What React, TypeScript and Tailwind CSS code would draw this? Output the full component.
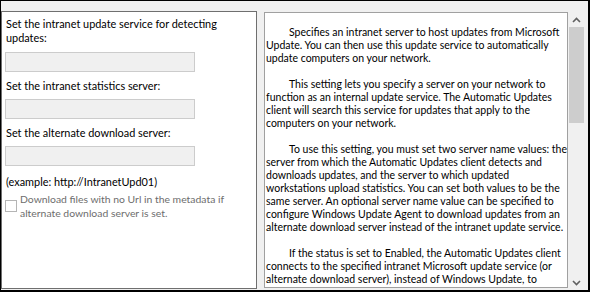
import React from "react";

const P1 = [
  "Specifies an intranet server to host updates from Microsoft",
  "Update. You can then use this update service to automatically",
  "update computers on your network.",
];
const P2 = [
  "This setting lets you specify a server on your network to",
  "function as an internal update service. The Automatic Updates",
  "client will search this service for updates that apply to the",
  "computers on your network.",
];
const P3 = [
  "To use this setting, you must set two server name values: the",
  "server from which the Automatic Updates client detects and",
  "downloads updates, and the server to which updated",
  "workstations upload statistics. You can set both values to be the",
  "same server. An optional server name value can be specified to",
  "configure Windows Update Agent to download updates from an",
  "alternate download server instead of the intranet update service.",
];
const P4 = [
  "If the status is set to Enabled, the Automatic Updates client",
  "connects to the specified intranet Microsoft update service (or",
  "alternate download server), instead of Windows Update, to",
];

function Para({ lines }: { lines: string[] }) {
  return (
    <div className="mb-[13px]">
      {lines.map((l, i) => (
        <div key={i} className={i === 0 ? "whitespace-nowrap pl-[23px]" : "whitespace-nowrap"}>
          {l}
        </div>
      ))}
    </div>
  );
}

function Chevron({ up }: { up?: boolean }) {
  return (
    <svg width="9" height="6" viewBox="0 0 9 6">
      <polyline
        points={up ? "1,5 4.5,1.5 8,5" : "1,1 4.5,4.5 8,1"}
        fill="none"
        stroke="#606060"
        strokeWidth="1.6"
      />
    </svg>
  );
}

export default function App() {
  return (
    <div className="w-[590px] h-[292px] bg-[#f0f0f0] border-l border-t border-r-2 border-b-2 border-black flex items-start pt-[10px] font-['Lato',sans-serif] text-black overflow-hidden">
      {/* Left options panel */}
      <div className="w-[256px] h-[278px] shrink-0 bg-white border border-[#6f6f6f] flex flex-col pl-[3px] pt-[5px] text-[10.9px]">
        <div className="pl-[1px] leading-[14px]">
          Set the intranet update service for detecting
          <br />
          updates:
        </div>
        <div className="mt-[7px] w-[190px] h-[20px] bg-[#f0f0f0] border border-[#cccccc]" />
        <div className="mt-[7px] pl-[1px] leading-[14px]">Set the intranet statistics server:</div>
        <div className="mt-[6px] w-[190px] h-[20px] bg-[#f0f0f0] border border-[#cccccc]" />
        <div className="mt-[7px] pl-[1px] leading-[14px]">Set the alternate download server:</div>
        <div className="mt-[6px] w-[190px] h-[20px] bg-[#f0f0f0] border border-[#cccccc]" />
        <div className="mt-[9px] pl-[1px] leading-[14px]">(example: http://IntranetUpd01)</div>
        <div className="mt-[3px] flex items-center">
          <div className="w-[12px] h-[12px] bg-white border border-[#b5b5b5] shrink-0" />
          <div className="ml-[3px] leading-[14px] text-[#6d6d6d] text-[10.4px]">
            Download files with no Url in the metadata if
            <br />
            alternate download server is set.
          </div>
        </div>
      </div>

      {/* Right help panel */}
      <div className="ml-[7px] mt-[1px] flex shrink-0">
        <div className="w-[304px] h-[276px] bg-white border border-[#a0a0a0] overflow-hidden pl-[1px] pt-[13px] leading-[13px] text-[10.5px]">
          <Para lines={P1} />
          <Para lines={P2} />
          <Para lines={P3} />
          <Para lines={P4} />
        </div>
        <div className="w-[17px] h-[278px] flex flex-col">
          <div className="h-[15px] flex items-center justify-center">
            <Chevron up />
          </div>
          <div className="mx-[1px] h-[96px] bg-[#cdcdcd]" />
          <div className="flex-1" />
          <div className="h-[15px] flex items-center justify-center">
            <Chevron />
          </div>
        </div>
      </div>
    </div>
  );
}
